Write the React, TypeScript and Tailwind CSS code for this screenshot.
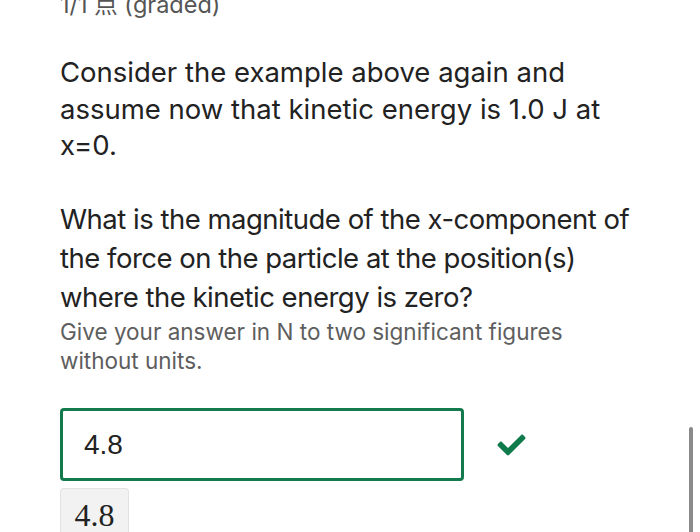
import { FaCheck } from "react-icons/fa";

export default function App() {
  return (
    <div className="relative h-[532px] w-[700px] overflow-hidden bg-white font-['Inter','Noto_Sans_CJK_SC',sans-serif]">
      <div className="w-[640px] pl-[60px]">
        {/* graded header, scrolled mostly out of view */}
        <div className="-mt-[10px] h-[30px] text-[23.5px] leading-[30px] text-[#555]">1/1 点 (graded)</div>

        <p className="mt-[34px] text-[27.5px] leading-[36.5px] text-[#222]">
          Consider the example above again and assume now that kinetic energy is 1.0 J at x=0.
        </p>

        <p className="mt-[36.5px] text-[27.5px] leading-[39px] tracking-[-0.5px] text-[#222]">
          What is the magnitude of the x-component of the force on the particle at the position(s) where the kinetic energy is zero?
        </p>
        <p className="text-[22.5px] leading-[29px] text-[#5e5e5e]">
          Give your answer in N to two significant figures without units.
        </p>

        <div className="mt-[33px] flex items-center gap-[32px]">
          <div className="flex h-[73px] w-[404px] shrink-0 items-center rounded-[4px] border-[3px] border-[#127a4d] px-[21px] font-['Liberation_Sans',sans-serif] text-[28px] text-[#222]">
            4.8
          </div>
          <FaCheck className="h-[28px] w-[31px] text-[#0f7a4b]" />
        </div>

        <div className="mt-[7px] inline-flex h-[50px] w-[69px] items-start justify-center rounded-t-[4px] border border-b-0 border-[#e2e2e2] bg-[#f2f2f2] pt-[8px] font-['Liberation_Serif',serif] text-[32px] leading-[36px] text-[#222]">
          4.8
        </div>
      </div>

      {/* scrollbar thumb */}
      <div className="absolute right-[7px] top-[427px] h-[110px] w-[4px] rounded-full bg-[#8a8a8a]" />
    </div>
  );
}
